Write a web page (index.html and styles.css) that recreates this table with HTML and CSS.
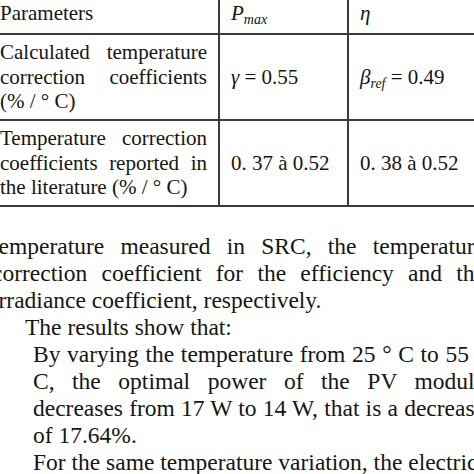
FILE: index.html
```html
<!DOCTYPE html>
<html lang="en">
<head>
<meta charset="utf-8">
<title>Temperature correction coefficients</title>
<link rel="stylesheet" href="styles.css">
</head>
<body>
<div class="page">
  <table class="params">
    <colgroup><col class="c1"><col class="c2"><col class="c3"></colgroup>
    <tr class="head">
      <td class="label">Parameters</td>
      <td><i>P</i><sub>max</sub></td>
      <td><i>η</i></td>
    </tr>
    <tr class="row">
      <td class="label">Calculated temperature correction coefficients (% / ° C)</td>
      <td><i>γ</i> = 0.55</td>
      <td><i>β</i><sub>ref</sub> = 0.49</td>
    </tr>
    <tr class="row">
      <td class="label">Temperature correction coefficients reported in the literature (% / ° C)</td>
      <td>0. 37 à 0.52</td>
      <td>0. 38 à 0.52</td>
    </tr>
  </table>
  <div class="text">
    <p class="para">
      <span class="jl">temperature measured in SRC, the temperature</span>
      <span class="jl">correction coefficient for the efficiency and the</span>
      <span class="ll">irradiance coefficient, respectively.</span>
    </p>
    <p class="lead">The results show that:</p>
    <ul class="results">
      <li>
        <span class="jl">By varying the temperature from 25 ° C to 55 °</span>
        <span class="jl">C, the optimal power of the PV module</span>
        <span class="jl">decreases from 17 W to 14 W, that is a decrease</span>
        <span class="ll">of 17.64%.</span>
      </li>
      <li>
        <span class="ll nw">For the same temperature variation, the electrical efficiency</span>
      </li>
    </ul>
  </div>
</div>
</body>
</html>
```
FILE: styles.css
```css
html, body {
  margin: 0;
  padding: 0;
  background: #fff;
}
body {
  width: 474px;
  height: 474px;
  overflow: hidden;
  font-family: "Liberation Serif", "Times New Roman", serif;
  color: #151515;
}
.page {
  width: 474px;
}
.params {
  margin: -8px 0 0 -14px;
  border-collapse: collapse;
  table-layout: fixed;
  width: 561px;
}
col.c1 { width: 232px; }
col.c2 { width: 129px; }
col.c3 { width: 200px; }
.params td {
  border: 2px solid #3a3a3a;
  padding: 0 9px 0 11px;
  font-size: 21px;
  line-height: 24.5px;
  vertical-align: middle;
  text-align: left;
}
.params td.label {
  padding: 0 11px 0 12px;
  text-align: justify;
}
.params tr.head td {
  height: 39px;
}
.params tr.row td {
  height: 84px;
}
.params sub {
  font-size: 14px;
  font-style: italic;
  vertical-align: -4px;
  line-height: 0;
}
.text {
  margin: 26px 0 0 -8px;
  width: 493px;
  font-size: 23.5px;
  line-height: 27px;
}
.text p {
  margin: 0;
}
.jl {
  display: block;
  text-align: justify;
  text-align-last: justify;
}
.ll {
  display: block;
}
.nw {
  white-space: nowrap;
}
.lead {
  padding-left: 33px;
}
.results {
  list-style: none;
  margin: 0;
  padding: 0 0 0 41px;
}
```
